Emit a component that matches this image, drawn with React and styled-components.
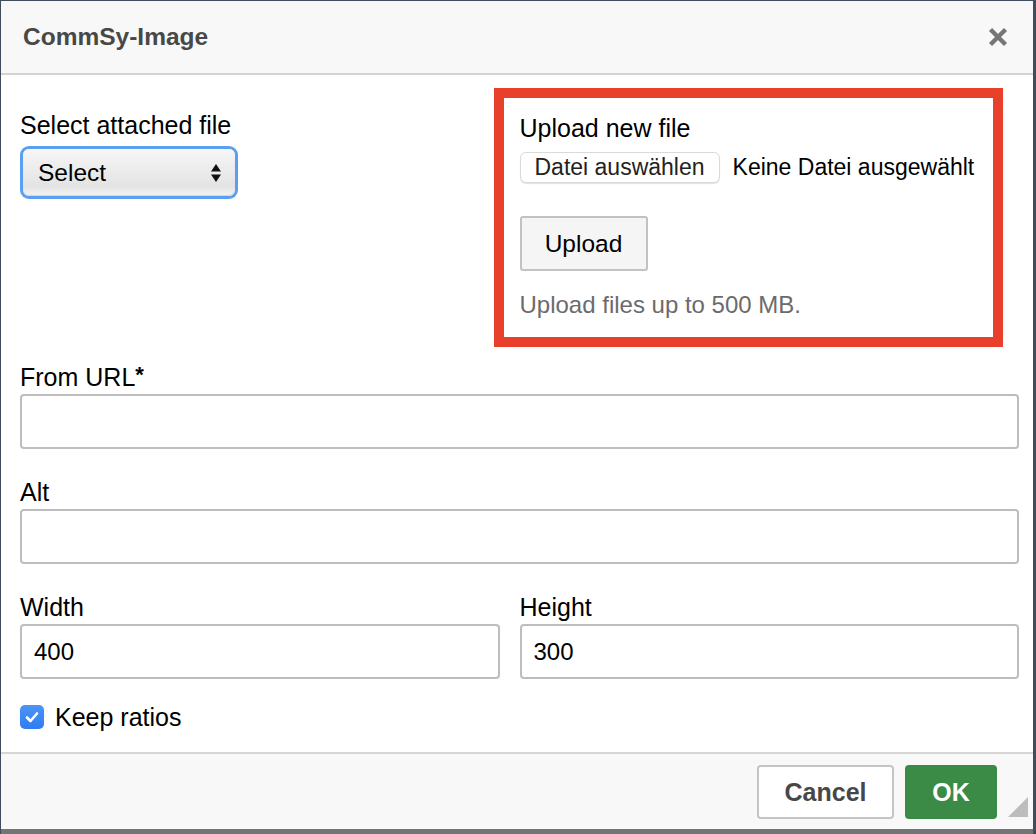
import React from 'react'
import styled, { createGlobalStyle } from 'styled-components'

const GlobalStyle = createGlobalStyle`
  html, body {
    margin: 0;
    padding: 0;
    background: #3e4d5b;
  }
  body {
    font-family: "Liberation Sans", Arial, Helvetica, sans-serif;
    color: #000;
  }
  * { box-sizing: border-box; }
`

export default function App() {
  return (
    <>
      <GlobalStyle />
      <Page>
        <Dialog>
          <Header>
            <Title>CommSy-Image</Title>
            <CloseButton aria-label="Close">
              <svg width="20" height="20" viewBox="0 0 20 20">
                <path d="M2.5 2.5 L17.5 17.5 M17.5 2.5 L2.5 17.5" stroke="#767676" strokeWidth="4.4" strokeLinecap="butt" />
              </svg>
            </CloseButton>
          </Header>

          <Body>
            <Columns below={14}>
              <Cell side="left">
                <TopLabel>Select attached file</TopLabel>
                <SelectBox>
                  <span>Select</span>
                  <svg width="10" height="20" viewBox="0 0 10 20">
                    <path d="M5 1 L10 8.5 L0 8.5 Z" fill="#111" />
                    <path d="M0 11.5 L10 11.5 L5 19 Z" fill="#111" />
                  </svg>
                </SelectBox>
              </Cell>
              <Cell side="right">
                <RedFrame>
                  <FrameLabel>Upload new file</FrameLabel>
                  <FileRow>
                    <FileButton>Datei auswählen</FileButton>
                    <FileText>Keine Datei ausgewählt</FileText>
                  </FileRow>
                  <UploadButton>Upload</UploadButton>
                  <Help>Upload files up to 500 MB.</Help>
                </RedFrame>
              </Cell>
            </Columns>

            <Field>
              <FieldLabel>From URL<Star>*</Star></FieldLabel>
              <TextInput />
            </Field>

            <Field>
              <FieldLabel>Alt</FieldLabel>
              <TextInput />
            </Field>

            <Columns below={24}>
              <Cell side="left">
                <FieldLabel>Width</FieldLabel>
                <TextInput defaultValue="400" />
              </Cell>
              <Cell side="right">
                <FieldLabel>Height</FieldLabel>
                <TextInput defaultValue="300" />
              </Cell>
            </Columns>

            <CheckRow>
              <CheckBox>
                <svg width="16" height="16" viewBox="0 0 16 16">
                  <path d="M3 8.5 L6.5 12 L13 4.5" stroke="#fff" strokeWidth="2.6" fill="none" strokeLinecap="round" strokeLinejoin="round" />
                </svg>
              </CheckBox>
              <CheckText>Keep ratios</CheckText>
            </CheckRow>
          </Body>

          <Footer>
            <FooterButton>Cancel</FooterButton>
            <FooterButton primary>OK</FooterButton>
            <Grip />
          </Footer>
        </Dialog>
      </Page>
    </>
  )
}

const Page = styled.div`
  width: 1036px;
  height: 834px;
  padding: 1px 0 0 1px;
  overflow: hidden;
`

const Dialog = styled.div`
  width: 1032px;
  background: #fff;
  border-bottom: 5px solid #747474;
  display: flex;
  flex-direction: column;
`

const Header = styled.div`
  height: 74px;
  background: #f8f8f8;
  border-bottom: 2px solid #d3d3d3;
  display: flex;
  align-items: center;
  justify-content: space-between;
  padding: 0 25px 0 22px;
`

const Title = styled.h1`
  margin: 0;
  font-size: 24.5px;
  font-weight: bold;
  color: #484848;
`

const CloseButton = styled.button`
  border: 0;
  background: transparent;
  padding: 0;
  width: 20px;
  height: 20px;
  display: flex;
  cursor: pointer;
`

const Body = styled.div`
  padding: 13px 14px 21px 19px;
`

const Columns = styled.div`
  display: grid;
  grid-template-columns: 1fr 1fr;
  margin-bottom: ${p => p.below}px;
`

const Cell = styled.div`
  min-width: 0;
  padding-right: ${p => (p.side === 'left' ? '20px' : '0')};
`

const TopLabel = styled.div`
  font-size: 25px;
  line-height: 28px;
  margin-top: 23px;
`

const SelectBox = styled.div`
  margin: 10px 0 0 3px;
  width: 212px;
  height: 47px;
  border-radius: 6px;
  background: linear-gradient(#f7f7f7, #e9e9e9 55%, #e4e4e4 80%, #f3f3f3);
  box-shadow: 0 0 0 3px #5a9ff0, inset 0 -1px 1px rgba(0, 0, 0, 0.12);
  display: flex;
  align-items: center;
  justify-content: space-between;
  padding: 0 14px 0 15px;
  font-size: 24.5px;
`

const RedFrame = styled.div`
  margin-left: -26px;
  width: 509px;
  border: 10px solid #e8402b;
  padding: 16px 16px 18px 16px;
`

const FrameLabel = styled.div`
  font-size: 25px;
  line-height: 28px;
`

const FileRow = styled.div`
  display: flex;
  align-items: center;
  gap: 13px;
  margin-top: 10px;
`

const FileButton = styled.div`
  height: 31px;
  padding: 0 14px;
  display: flex;
  align-items: center;
  background: #fff;
  border-radius: 6px;
  border: 1px solid #dadada;
  box-shadow: 0 1px 1px rgba(0, 0, 0, 0.12);
  font-size: 23px;
  color: #222;
`

const FileText = styled.span`
  font-size: 23px;
`

const UploadButton = styled.button`
  display: block;
  margin-top: 33px;
  width: 128px;
  height: 55px;
  background: #f5f5f5;
  border: 2px solid #c2c2c2;
  border-radius: 3px;
  font-family: inherit;
  font-size: 24.5px;
  color: #000;
`

const Help = styled.div`
  margin-top: 20px;
  font-size: 24px;
  line-height: 28px;
  color: #6b6b6b;
`

const Field = styled.div`
  margin-bottom: 29px;
`

const FieldLabel = styled.div`
  font-size: 25px;
  line-height: 28px;
  margin-bottom: 3px;
`

const Star = styled.span`
  font-weight: bold;
  vertical-align: 4px;
  font-size: 22px;
`

const TextInput = styled.input`
  display: block;
  width: 100%;
  height: 55px;
  border: 2px solid #bdbdbd;
  border-radius: 4px;
  padding: 0 12px;
  font-family: inherit;
  font-size: 24px;
  color: #000;
  outline: none;
`

const CheckRow = styled.div`
  display: flex;
  align-items: center;
  gap: 11px;
  height: 28px;
`

const CheckBox = styled.span`
  width: 24px;
  height: 24px;
  border-radius: 5px;
  background: linear-gradient(#4b95f7, #2f7cf2);
  display: flex;
  align-items: center;
  justify-content: center;
`

const CheckText = styled.span`
  font-size: 25px;
`

const Footer = styled.div`
  position: relative;
  background: #f8f8f8;
  border-top: 2px solid #d6d6d6;
  padding: 11px 36px 10px 0;
  display: flex;
  justify-content: flex-end;
  gap: 11px;
`

const FooterButton = styled.button`
  height: 54px;
  width: ${p => (p.primary ? '92px' : '137px')};
  padding: 0;
  border-radius: 4px;
  border: 2px solid ${p => (p.primary ? '#3b8a46' : '#c4c4c4')};
  background: ${p => (p.primary ? '#3b8a46' : '#fff')};
  color: ${p => (p.primary ? '#fff' : '#474747')};
  font-family: inherit;
  font-weight: bold;
  font-size: 25px;
`

const Grip = styled.span`
  position: absolute;
  right: 5px;
  bottom: 12px;
  width: 0;
  height: 0;
  border-style: solid;
  border-width: 0 0 20px 20px;
  border-color: transparent transparent #bdbdbd transparent;
`
